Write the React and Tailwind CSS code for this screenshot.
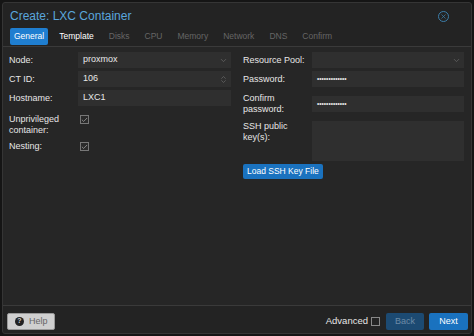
import { ChevronDown, ChevronsUpDown, X, Check } from "lucide-react";

const font = { fontFamily: '"Liberation Sans", Arial, sans-serif' };

function Field({ value, icon, password }) {
  return (
    <div className="flex h-[16px] w-[153px] items-center justify-between bg-[#2f2f2f] pl-[5px] pr-[3px] text-[9px] text-[#e8e8e8]">
      <span className={password ? "text-[6.5px]" : ""}>{value}</span>
      {icon === "down" && <ChevronDown size={9} className="text-[#666]" />}
      {icon === "spin" && <ChevronsUpDown size={9} className="text-[#666]" />}
    </div>
  );
}

function Box({ checked }) {
  return (
    <div className="flex h-[9px] w-[9px] items-center justify-center border border-[#777] bg-[#2a2a2a]">
      {checked && <Check size={8} strokeWidth={2.5} className="text-[#aaa]" />}
    </div>
  );
}

function Row({ label, children, top = false, className = "" }) {
  return (
    <div className={`flex ${top ? "items-start" : "items-center"} ${className}`}>
      <div className="w-[69px] shrink-0 text-[9px] leading-[11px] text-[#e6e6e6]">{label}</div>
      {children}
    </div>
  );
}

export default function App() {
  const tabs = ["General", "Template", "Disks", "CPU", "Memory", "Network", "DNS", "Confirm"];
  return (
    <div className="h-[336px] w-[474px] bg-[#151515] p-[2px]" style={font}>
      <div className="flex h-full flex-col rounded-[3px] border border-[#353535] bg-[#232323]">
        <div className="flex h-[24px] items-center justify-between pl-[7px] pr-[22px] pt-[2px]">
          <span className="text-[12px] text-[#5aa6dc]">Create: LXC Container</span>
          <div className="flex h-[11px] w-[11px] items-center justify-center rounded-full border border-[#3c7eaa]">
            <X size={7} strokeWidth={2.5} className="text-[#3c7eaa]" />
          </div>
        </div>
        <div className="flex h-[20px] items-center gap-[15px] border-b border-[#3a3a3a] pl-[7px]">
          {tabs.map((t, i) => (
            <span
              key={t}
              className={`rounded-[2px] py-[2px] text-[8.5px] ${
                i === 0
                  ? "-mr-[4px] bg-[#1f7ed0] px-[4px] text-white"
                  : i === 1
                  ? "text-white"
                  : "text-[#666]"
              }`}
            >
              {t}
            </span>
          ))}
        </div>
        <div className="flex flex-1 gap-[12px] bg-[#262626] pl-[6px] pt-[5px]">
          <div className="flex w-[222px] flex-col gap-[3px]">
            <Row label="Node:"><Field value="proxmox" icon="down" /></Row>
            <Row label="CT ID:"><Field value="106" icon="spin" /></Row>
            <Row label="Hostname:"><Field value="LXC1" /></Row>
            <Row label={<>Unprivileged<br />container:</>} top className="mt-[5px]">
              <div className="pl-[2px] pt-[1px]"><Box checked /></div>
            </Row>
            <Row label="Nesting:" className="mt-[2px]">
              <div className="pl-[2px]"><Box checked /></div>
            </Row>
          </div>
          <div className="flex w-[221px] flex-col gap-[3px]">
            <Row label="Resource Pool:"><Field value="" icon="down" /></Row>
            <Row label="Password:"><Field value="•••••••••••••" password /></Row>
            <Row label={<>Confirm<br />password:</>} className="mt-[3px]">
              <Field value="•••••••••••••" password />
            </Row>
            <Row label={<>SSH public<br />key(s):</>} top className="mt-[3px]">
              <div className="h-[40px] w-[153px] bg-[#2f2f2f]" />
            </Row>
            <div className="flex">
              <button className="rounded-[2px] bg-[#1a72bf] px-[4px] py-[2px] text-[8.5px] leading-[11px] text-white">
                Load SSH Key File
              </button>
            </div>
          </div>
        </div>
        <div className="flex h-[28px] items-end justify-between border-t border-[#3a3a3a] pb-[3px] pl-[4px] pr-[3px]">
          <button className="flex h-[17px] w-[48px] items-center gap-[5px] rounded-[2px] border border-[#999] bg-[#cfcfcf] pl-[7px] text-[9px] text-[#666]">
            <span className="flex h-[9px] w-[9px] items-center justify-center rounded-full bg-[#222] text-[7px] font-bold text-[#cfcfcf]">?</span>
            Help
          </button>
          <div className="flex items-center">
            <span className="text-[9.5px] text-[#e6e6e6]">Advanced</span>
            <div className="ml-[3px] h-[9px] w-[9px] border border-[#888]" />
            <button className="ml-[6px] h-[17px] w-[38px] rounded-[2px] bg-[#1c4a72] text-[9px] text-[#6d8aa6]">Back</button>
            <button className="ml-[5px] h-[17px] w-[39px] rounded-[2px] bg-[#1a72bf] text-[9px] text-white">Next</button>
          </div>
        </div>
      </div>
    </div>
  );
}
